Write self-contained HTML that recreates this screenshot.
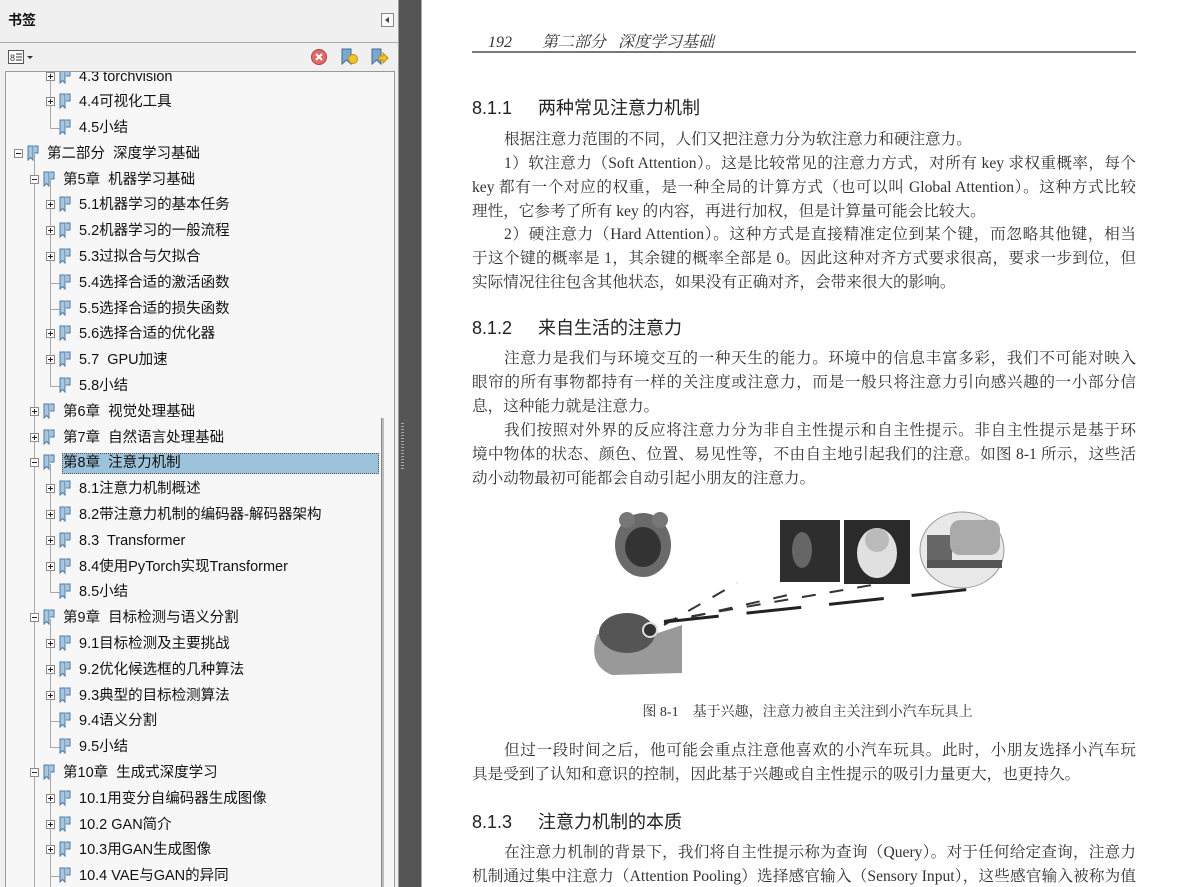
<!DOCTYPE html>
<html><head><meta charset="utf-8">
<style>
*{margin:0;padding:0;box-sizing:border-box}
html{width:1192px;height:887px;overflow:hidden}
body{width:1192px;height:887px;overflow:hidden;position:relative;background:#555;font-family:"Liberation Sans","Noto Sans CJK SC",sans-serif}
#left{position:absolute;left:0;top:0;width:399px;height:887px;background:#f0f0f0;border-right:1px solid #999;overflow:hidden}
#title{position:absolute;left:8px;top:10px;font-size:14px;font-weight:bold;color:#111}
#collapse{position:absolute;left:381px;top:13px;width:13px;height:14px;border:1px solid #888;background:#f8f8f8}
#collapse:after{content:"";position:absolute;left:3px;top:3px;border-right:4px solid #444;border-top:3px solid transparent;border-bottom:3px solid transparent}
#sep{position:absolute;left:0;top:42px;width:399px;height:1px;background:#aaa}
#tree{position:absolute;left:5px;top:71px;width:390px;height:830px;background:#f7f7f7;border:1px solid #999;overflow:hidden}
.row{position:absolute;height:22px;line-height:22px;font-size:14.5px;color:#111;white-space:nowrap}
.bx{position:absolute;width:9px;height:9px;border:1px solid #8a8a8a;background:#fff}
.bx:before{content:"";position:absolute;left:1px;top:3px;width:5px;height:1px;background:#222}
.bx.p:after{content:"";position:absolute;left:3px;top:1px;width:1px;height:5px;background:#222}
.ic{position:absolute;width:12px;height:17px}
.vl{position:absolute;width:1px;background:#a8a8a8}
.hl{position:absolute;height:1px;background:#a8a8a8}
#sel{position:absolute;left:56px;top:381px;width:317px;height:21px;background:#9dc3dc;border:1px dotted #555}
#page{position:absolute;left:421px;top:0;width:771px;height:887px;background:#fff;border-left:1px solid #aaa;overflow:hidden}
.t{position:absolute;left:50px;width:664px;font-family:"Liberation Serif","Noto Serif CJK SC",serif;font-size:15.6px;color:#333;line-height:24px;height:24px;white-space:nowrap;overflow:visible}
.f{text-align:justify;text-align-last:justify}
.in{padding-left:32px}
.h{position:absolute;left:50px;font-family:"Liberation Sans","Noto Sans CJK SC",sans-serif;font-size:18px;color:#222;white-space:nowrap}
.h b{font-weight:normal;display:inline-block;width:66px}
</style></head><body>
<div id="left">
 <div id="title">书签</div>
 <div id="collapse"></div>
 <div id="sep"></div>
 <svg style="position:absolute;left:8px;top:49px" width="26" height="16"><rect x="0.5" y="1.5" width="15" height="13" fill="#fff" stroke="#555"/><text x="2" y="12" font-size="9" font-family="Liberation Sans" fill="#333">8</text><line x1="8" y1="5" x2="14" y2="5" stroke="#333"/><line x1="8" y1="8" x2="14" y2="8" stroke="#333"/><line x1="8" y1="11" x2="14" y2="11" stroke="#333"/><path d="M19 7 L25 7 L22 10Z" fill="#333"/></svg>
 <svg style="position:absolute;left:310px;top:48px" width="18" height="18"><circle cx="9" cy="9" r="7.5" fill="#e06a6a" stroke="#b54040"/><path d="M6 6 L12 12 M12 6 L6 12" stroke="#fff" stroke-width="2"/></svg>
 <svg style="position:absolute;left:340px;top:47px" width="20" height="20"><path d="M2 2 L11 2 L11 17 L6.5 13 L2 17Z" fill="#7aa6cf" stroke="#3e6b95"/><circle cx="13" cy="12" r="4.5" fill="#f1c232" stroke="#c49000"/></svg>
 <svg style="position:absolute;left:370px;top:47px" width="20" height="20"><path d="M2 2 L11 2 L11 17 L6.5 13 L2 17Z" fill="#7aa6cf" stroke="#3e6b95"/><path d="M9 9 L13 9 L13 6 L18 11 L13 16 L13 13 L9 13Z" fill="#f1c232" stroke="#c49000"/></svg>
 <div id="tree">
  <div id="sel"></div>
  <div class="vl" style="left:44px;top:0;height:57px"></div>
  <div class="vl" style="left:28px;top:82px;height:760px"></div>
  <div class="vl" style="left:44px;top:108px;height:207px"></div>
  <div class="vl" style="left:44px;top:392px;height:128px"></div>
  <div class="vl" style="left:44px;top:547px;height:128px"></div>
  <div class="vl" style="left:44px;top:701px;height:140px"></div>
  <svg width="0" height="0" style="position:absolute"><defs><symbol id="bm" viewBox="0 0 12 17"><path d="M1 1 L6 1 L6 15 L3.5 12.5 L1 15Z" fill="#a9c6e0" stroke="#4d7aa3"/><path d="M7 1 L11 1 L11 8 L7 8" fill="#a9c6e0" stroke="#4d7aa3"/></symbol></defs></svg>
  <div class="row" style="left:0;top:-6px;width:390px"><div class="bx p" style="left:40px;top:6px"></div><svg class="ic" style="left:53px;top:2px"><use href="#bm"/></svg><span style="position:absolute;left:73px">4.3 torchvision</span></div>
  <div class="row" style="left:0;top:19px"><div class="bx p" style="left:40px;top:6px"></div><svg class="ic" style="left:53px;top:2px"><use href="#bm"/></svg><span style="position:absolute;left:73px">4.4可视化工具</span></div>
  <div class="row" style="left:0;top:45px"><div class="hl" style="left:44px;top:11px;width:10px"></div><svg class="ic" style="left:53px;top:2px"><use href="#bm"/></svg><span style="position:absolute;left:73px">4.5小结</span></div>
  <div class="row" style="left:0;top:71px"><div class="bx" style="left:8px;top:6px"></div><svg class="ic" style="left:21px;top:2px"><use href="#bm"/></svg><span style="position:absolute;left:41px">第二部分&nbsp; 深度学习基础</span></div>
  <div class="row" style="left:0;top:97px"><div class="bx" style="left:24px;top:6px"></div><svg class="ic" style="left:37px;top:2px"><use href="#bm"/></svg><span style="position:absolute;left:57px">第5章&nbsp; 机器学习基础</span></div>
  <div class="row" style="left:0;top:122px"><div class="bx p" style="left:40px;top:6px"></div><svg class="ic" style="left:53px;top:2px"><use href="#bm"/></svg><span style="position:absolute;left:73px">5.1机器学习的基本任务</span></div>
  <div class="row" style="left:0;top:148px"><div class="bx p" style="left:40px;top:6px"></div><svg class="ic" style="left:53px;top:2px"><use href="#bm"/></svg><span style="position:absolute;left:73px">5.2机器学习的一般流程</span></div>
  <div class="row" style="left:0;top:174px"><div class="bx p" style="left:40px;top:6px"></div><svg class="ic" style="left:53px;top:2px"><use href="#bm"/></svg><span style="position:absolute;left:73px">5.3过拟合与欠拟合</span></div>
  <div class="row" style="left:0;top:200px"><div class="hl" style="left:44px;top:11px;width:10px"></div><svg class="ic" style="left:53px;top:2px"><use href="#bm"/></svg><span style="position:absolute;left:73px">5.4选择合适的激活函数</span></div>
  <div class="row" style="left:0;top:226px"><div class="hl" style="left:44px;top:11px;width:10px"></div><svg class="ic" style="left:53px;top:2px"><use href="#bm"/></svg><span style="position:absolute;left:73px">5.5选择合适的损失函数</span></div>
  <div class="row" style="left:0;top:251px"><div class="bx p" style="left:40px;top:6px"></div><svg class="ic" style="left:53px;top:2px"><use href="#bm"/></svg><span style="position:absolute;left:73px">5.6选择合适的优化器</span></div>
  <div class="row" style="left:0;top:277px"><div class="bx p" style="left:40px;top:6px"></div><svg class="ic" style="left:53px;top:2px"><use href="#bm"/></svg><span style="position:absolute;left:73px">5.7&nbsp; GPU加速</span></div>
  <div class="row" style="left:0;top:303px"><div class="hl" style="left:44px;top:11px;width:10px"></div><svg class="ic" style="left:53px;top:2px"><use href="#bm"/></svg><span style="position:absolute;left:73px">5.8小结</span></div>
  <div class="row" style="left:0;top:329px"><div class="bx p" style="left:24px;top:6px"></div><svg class="ic" style="left:37px;top:2px"><use href="#bm"/></svg><span style="position:absolute;left:57px">第6章&nbsp; 视觉处理基础</span></div>
  <div class="row" style="left:0;top:355px"><div class="bx p" style="left:24px;top:6px"></div><svg class="ic" style="left:37px;top:2px"><use href="#bm"/></svg><span style="position:absolute;left:57px">第7章&nbsp; 自然语言处理基础</span></div>
  <div class="row" style="left:0;top:380px"><div class="bx" style="left:24px;top:6px"></div><svg class="ic" style="left:37px;top:2px"><use href="#bm"/></svg><span style="position:absolute;left:57px">第8章&nbsp; 注意力机制</span></div>
  <div class="row" style="left:0;top:406px"><div class="bx p" style="left:40px;top:6px"></div><svg class="ic" style="left:53px;top:2px"><use href="#bm"/></svg><span style="position:absolute;left:73px">8.1注意力机制概述</span></div>
  <div class="row" style="left:0;top:432px"><div class="bx p" style="left:40px;top:6px"></div><svg class="ic" style="left:53px;top:2px"><use href="#bm"/></svg><span style="position:absolute;left:73px">8.2带注意力机制的编码器-解码器架构</span></div>
  <div class="row" style="left:0;top:458px"><div class="bx p" style="left:40px;top:6px"></div><svg class="ic" style="left:53px;top:2px"><use href="#bm"/></svg><span style="position:absolute;left:73px">8.3&nbsp; Transformer</span></div>
  <div class="row" style="left:0;top:484px"><div class="bx p" style="left:40px;top:6px"></div><svg class="ic" style="left:53px;top:2px"><use href="#bm"/></svg><span style="position:absolute;left:73px">8.4使用PyTorch实现Transformer</span></div>
  <div class="row" style="left:0;top:509px"><div class="hl" style="left:44px;top:11px;width:10px"></div><svg class="ic" style="left:53px;top:2px"><use href="#bm"/></svg><span style="position:absolute;left:73px">8.5小结</span></div>
  <div class="row" style="left:0;top:535px"><div class="bx" style="left:24px;top:6px"></div><svg class="ic" style="left:37px;top:2px"><use href="#bm"/></svg><span style="position:absolute;left:57px">第9章&nbsp; 目标检测与语义分割</span></div>
  <div class="row" style="left:0;top:561px"><div class="bx p" style="left:40px;top:6px"></div><svg class="ic" style="left:53px;top:2px"><use href="#bm"/></svg><span style="position:absolute;left:73px">9.1目标检测及主要挑战</span></div>
  <div class="row" style="left:0;top:587px"><div class="bx p" style="left:40px;top:6px"></div><svg class="ic" style="left:53px;top:2px"><use href="#bm"/></svg><span style="position:absolute;left:73px">9.2优化候选框的几种算法</span></div>
  <div class="row" style="left:0;top:613px"><div class="bx p" style="left:40px;top:6px"></div><svg class="ic" style="left:53px;top:2px"><use href="#bm"/></svg><span style="position:absolute;left:73px">9.3典型的目标检测算法</span></div>
  <div class="row" style="left:0;top:638px"><div class="hl" style="left:44px;top:11px;width:10px"></div><svg class="ic" style="left:53px;top:2px"><use href="#bm"/></svg><span style="position:absolute;left:73px">9.4语义分割</span></div>
  <div class="row" style="left:0;top:664px"><div class="hl" style="left:44px;top:11px;width:10px"></div><svg class="ic" style="left:53px;top:2px"><use href="#bm"/></svg><span style="position:absolute;left:73px">9.5小结</span></div>
  <div class="row" style="left:0;top:690px"><div class="bx" style="left:24px;top:6px"></div><svg class="ic" style="left:37px;top:2px"><use href="#bm"/></svg><span style="position:absolute;left:57px">第10章&nbsp; 生成式深度学习</span></div>
  <div class="row" style="left:0;top:716px"><div class="bx p" style="left:40px;top:6px"></div><svg class="ic" style="left:53px;top:2px"><use href="#bm"/></svg><span style="position:absolute;left:73px">10.1用变分自编码器生成图像</span></div>
  <div class="row" style="left:0;top:742px"><div class="bx p" style="left:40px;top:6px"></div><svg class="ic" style="left:53px;top:2px"><use href="#bm"/></svg><span style="position:absolute;left:73px">10.2 GAN简介</span></div>
  <div class="row" style="left:0;top:767px"><div class="bx p" style="left:40px;top:6px"></div><svg class="ic" style="left:53px;top:2px"><use href="#bm"/></svg><span style="position:absolute;left:73px">10.3用GAN生成图像</span></div>
  <div class="row" style="left:0;top:793px"><div class="hl" style="left:44px;top:11px;width:10px"></div><svg class="ic" style="left:53px;top:2px"><use href="#bm"/></svg><span style="position:absolute;left:73px">10.4 VAE与GAN的异同</span></div>
  <div style="position:absolute;left:375px;top:346px;width:3px;height:500px;background:#bbb;border-left:1px solid #888"></div>
 </div>
</div>
<div style="position:absolute;left:401px;top:423px;width:3px;height:48px;background:repeating-linear-gradient(#aaa 0 1px,transparent 1px 3px)"></div>
<div id="page">
 <div style="position:absolute;left:66px;top:29px;font-family:'Liberation Serif','Noto Serif CJK SC',serif;font-style:italic;font-size:16px;color:#333;white-space:nowrap">192<span style="display:inline-block;width:30px"></span>第二部分&nbsp;&nbsp; 深度学习基础</div>
 <div style="position:absolute;left:50px;top:51px;width:664px;height:2px;background:#777"></div>
 <div class="h" style="top:94px"><b>8.1.1</b>两种常见注意力机制</div>
 <div class="t in" style="top:128px">根据注意力范围的不同，人们又把注意力分为软注意力和硬注意力。</div>
 <div class="t in f" style="top:152px">1）软注意力（Soft Attention）。这是比较常见的注意力方式，对所有 key 求权重概率，每个</div>
 <div class="t f" style="top:176px">key 都有一个对应的权重，是一种全局的计算方式（也可以叫 Global Attention）。这种方式比较</div>
 <div class="t" style="top:200px">理性，它参考了所有 key 的内容，再进行加权，但是计算量可能会比较大。</div>
 <div class="t in f" style="top:223px">2）硬注意力（Hard Attention）。这种方式是直接精准定位到某个键，而忽略其他键，相当</div>
 <div class="t f" style="top:247px">于这个键的概率是 1，其余键的概率全部是 0。因此这种对齐方式要求很高，要求一步到位，但</div>
 <div class="t" style="top:271px">实际情况往往包含其他状态，如果没有正确对齐，会带来很大的影响。</div>
 <div class="h" style="top:314px"><b>8.1.2</b>来自生活的注意力</div>
 <div class="t in f" style="top:347px">注意力是我们与环境交互的一种天生的能力。环境中的信息丰富多彩，我们不可能对映入</div>
 <div class="t f" style="top:371px">眼帘的所有事物都持有一样的关注度或注意力，而是一般只将注意力引向感兴趣的一小部分信</div>
 <div class="t" style="top:395px">息，这种能力就是注意力。</div>
 <div class="t in f" style="top:419px">我们按照对外界的反应将注意力分为非自主性提示和自主性提示。非自主性提示是基于环</div>
 <div class="t f" style="top:443px">境中物体的状态、颜色、位置、易见性等，不由自主地引起我们的注意。如图 8-1 所示，这些活</div>
 <div class="t" style="top:467px">动小动物最初可能都会自动引起小朋友的注意力。</div>
 <svg style="position:absolute;left:160px;top:505px" width="430" height="180">
  <ellipse cx="61" cy="40" rx="28" ry="32" fill="#6a6a6a"/><circle cx="45" cy="15" r="8" fill="#777"/><circle cx="78" cy="15" r="8" fill="#777"/><ellipse cx="61" cy="42" rx="18" ry="20" fill="#333"/>
  <rect x="198" y="15" width="60" height="62" fill="#2e2e2e"/><ellipse cx="220" cy="45" rx="10" ry="18" fill="#666"/>
  <rect x="262" y="15" width="66" height="64" fill="#2a2a2a"/><ellipse cx="295" cy="48" rx="20" ry="25" fill="#e0e0e0"/><circle cx="295" cy="35" r="12" fill="#bbb"/>
  <ellipse cx="380" cy="45" rx="42" ry="38" fill="#e8e8e8" stroke="#999"/><rect x="345" y="30" width="25" height="30" fill="#666"/><rect x="368" y="15" width="50" height="35" rx="10" fill="#aaa"/><rect x="345" y="55" width="75" height="8" fill="#555"/>
  <path d="M70 130 Q40 110 15 130 Q5 160 30 170 L100 168 L100 120Z" fill="#999"/><ellipse cx="45" cy="128" rx="28" ry="20" fill="#555"/><circle cx="68" cy="125" r="7" fill="#333" stroke="#ddd" stroke-width="2"/>
  <g stroke="#333" stroke-width="2" stroke-dasharray="14 14"><line x1="82" y1="120" x2="155" y2="78"/><line x1="82" y1="118" x2="215" y2="88"/><line x1="82" y1="116" x2="290" y2="80"/></g>
  <g stroke="#222" stroke-width="3" stroke-dasharray="55 28"><line x1="82" y1="117" x2="400" y2="83"/></g>
 </svg>
 <div style="position:absolute;left:0;width:771px;top:701px;text-align:center;font-family:'Liberation Serif','Noto Serif CJK SC',serif;font-size:14px;color:#333;white-space:pre">图 8-1    基于兴趣，注意力被自主关注到小汽车玩具上</div>
 <div class="t in f" style="top:739px">但过一段时间之后，他可能会重点注意他喜欢的小汽车玩具。此时，小朋友选择小汽车玩</div>
 <div class="t" style="top:763px">具是受到了认知和意识的控制，因此基于兴趣或自主性提示的吸引力量更大，也更持久。</div>
 <div class="h" style="top:808px"><b>8.1.3</b>注意力机制的本质</div>
 <div class="t in f" style="top:841px">在注意力机制的背景下，我们将自主性提示称为查询（Query）。对于任何给定查询，注意力</div>
 <div class="t f" style="top:865px">机制通过集中注意力（Attention Pooling）选择感官输入（Sensory Input），这些感官输入被称为值</div>
</div>
</body></html>
